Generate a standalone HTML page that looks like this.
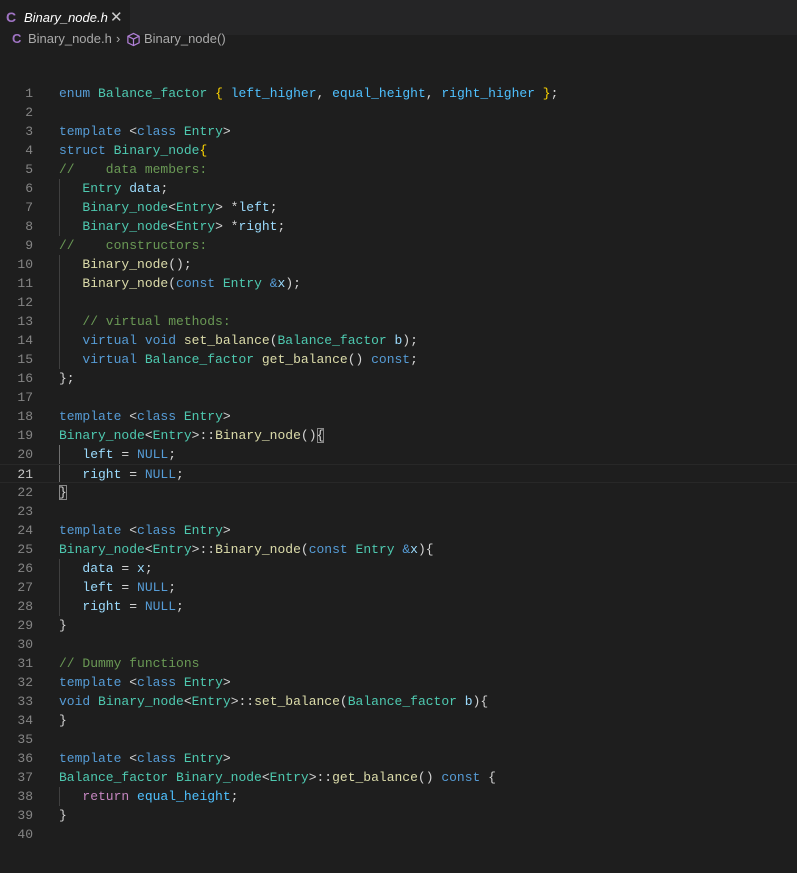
<!DOCTYPE html>
<html><head><meta charset="utf-8"><style>
body{margin:0;width:797px;height:873px;background:#1e1e1e;overflow:hidden;font-family:"Liberation Sans",sans-serif;}
.tabbar{position:absolute;left:0;top:0;width:797px;height:35px;background:#252526;}
.tab{position:absolute;left:0;top:0;width:130px;height:35px;background:#1e1e1e;color:#fff;font-size:13px;}
.tab .c{position:absolute;left:6px;top:9px;color:#a074c4;font-weight:bold;font-size:14px}
.tab .n{position:absolute;left:24px;top:10px;font-style:italic}
.tab .x{position:absolute;left:110px;top:8px;font-size:15px;color:#ccc}
.bc{position:absolute;left:0;top:31px;height:20px;color:#a9a9a9;font-size:13px;}
.bc span{position:absolute;top:0;white-space:nowrap}
.code{position:absolute;left:0;top:84px;font-family:"Liberation Mono",monospace;font-size:13px;}
.l{position:relative;height:19px;line-height:19px;white-space:pre;}
.ln{position:absolute;left:0;width:33px;text-align:right;color:#858585}
.t{position:absolute;left:59px;color:#d4d4d4}
.cur{border-top:1px solid #282828;border-bottom:1px solid #282828;box-sizing:border-box;width:797px}
.cur .ln{color:#c6c6c6}
.k{color:#569cd6}.ty{color:#4ec9b0}.f{color:#dcdcaa}.v{color:#9cdcfe}.cm{color:#6a9955}.e{color:#4fc1ff}.g{color:#ffd700}.r{color:#c586c0}
.guide{position:absolute;width:1px;background:#404040}
</style></head><body>
<div class="tabbar"><div class="tab"><span class="c">C</span><span class="n">Binary_node.h</span><span class="x">✕</span></div></div>
<div class="bc">
<span style="left:12px;color:#a074c4;font-weight:bold">C</span>
<span style="left:28px">Binary_node.h</span>
<span style="left:116px">›</span>
<span style="left:126px;top:1px"><svg width="15" height="15" viewBox="0 0 16 16"><path d="M8 1.5 14 4.5v7L8 14.5 2 11.5v-7z M2 4.5 8 7.5 14 4.5 M8 7.5v7" fill="none" stroke="#b180d7" stroke-width="1.3"/></svg></span>
<span style="left:144px">Binary_node()</span>
</div>
<div class="guide" style="left:59px;top:179px;height:57px"></div>
<div class="guide" style="left:59px;top:255px;height:114px"></div>
<div class="guide" style="left:59px;top:445px;height:38px;background:#707070"></div>
<div class="guide" style="left:59px;top:559px;height:57px"></div>
<div class="guide" style="left:59px;top:787px;height:19px"></div>
<div class="code">
<div class="l"><span class="ln">1</span><span class="t"><span class="k">enum</span> <span class="ty">Balance_factor</span> <span class="g">{</span> <span class="e">left_higher</span>, <span class="e">equal_height</span>, <span class="e">right_higher</span> <span class="g">}</span>;</span></div>
<div class="l"><span class="ln">2</span></div>
<div class="l"><span class="ln">3</span><span class="t"><span class="k">template</span> &lt;<span class="k">class</span> <span class="ty">Entry</span>&gt;</span></div>
<div class="l"><span class="ln">4</span><span class="t"><span class="k">struct</span> <span class="ty">Binary_node</span><span class="g">{</span></span></div>
<div class="l"><span class="ln">5</span><span class="t"><span class="cm">//    data members:</span></span></div>
<div class="l"><span class="ln">6</span><span class="t">   <span class="ty">Entry</span> <span class="v">data</span>;</span></div>
<div class="l"><span class="ln">7</span><span class="t">   <span class="ty">Binary_node</span>&lt;<span class="ty">Entry</span>&gt; *<span class="v">left</span>;</span></div>
<div class="l"><span class="ln">8</span><span class="t">   <span class="ty">Binary_node</span>&lt;<span class="ty">Entry</span>&gt; *<span class="v">right</span>;</span></div>
<div class="l"><span class="ln">9</span><span class="t"><span class="cm">//    constructors:</span></span></div>
<div class="l"><span class="ln">10</span><span class="t">   <span class="f">Binary_node</span>();</span></div>
<div class="l"><span class="ln">11</span><span class="t">   <span class="f">Binary_node</span>(<span class="k">const</span> <span class="ty">Entry</span> <span class="k">&amp;</span><span class="v">x</span>);</span></div>
<div class="l"><span class="ln">12</span></div>
<div class="l"><span class="ln">13</span><span class="t">   <span class="cm">// virtual methods:</span></span></div>
<div class="l"><span class="ln">14</span><span class="t">   <span class="k">virtual</span> <span class="k">void</span> <span class="f">set_balance</span>(<span class="ty">Balance_factor</span> <span class="v">b</span>);</span></div>
<div class="l"><span class="ln">15</span><span class="t">   <span class="k">virtual</span> <span class="ty">Balance_factor</span> <span class="f">get_balance</span>() <span class="k">const</span>;</span></div>
<div class="l"><span class="ln">16</span><span class="t">};</span></div>
<div class="l"><span class="ln">17</span></div>
<div class="l"><span class="ln">18</span><span class="t"><span class="k">template</span> &lt;<span class="k">class</span> <span class="ty">Entry</span>&gt;</span></div>
<div class="l"><span class="ln">19</span><span class="t"><span class="ty">Binary_node</span>&lt;<span class="ty">Entry</span>&gt;::<span class="f">Binary_node</span>()<span style="outline:1px solid #888;outline-offset:-1px">{</span></span></div>
<div class="l"><span class="ln">20</span><span class="t">   <span class="v">left</span> = <span class="k">NULL</span>;</span></div>
<div class="l cur"><span class="ln">21</span><span class="t">   <span class="v">right</span> = <span class="k">NULL</span>;</span></div>
<div class="l"><span class="ln">22</span><span class="t"><span style="outline:1px solid #888;outline-offset:-1px">}</span></span></div>
<div class="l"><span class="ln">23</span></div>
<div class="l"><span class="ln">24</span><span class="t"><span class="k">template</span> &lt;<span class="k">class</span> <span class="ty">Entry</span>&gt;</span></div>
<div class="l"><span class="ln">25</span><span class="t"><span class="ty">Binary_node</span>&lt;<span class="ty">Entry</span>&gt;::<span class="f">Binary_node</span>(<span class="k">const</span> <span class="ty">Entry</span> <span class="k">&amp;</span><span class="v">x</span>){</span></div>
<div class="l"><span class="ln">26</span><span class="t">   <span class="v">data</span> = <span class="v">x</span>;</span></div>
<div class="l"><span class="ln">27</span><span class="t">   <span class="v">left</span> = <span class="k">NULL</span>;</span></div>
<div class="l"><span class="ln">28</span><span class="t">   <span class="v">right</span> = <span class="k">NULL</span>;</span></div>
<div class="l"><span class="ln">29</span><span class="t">}</span></div>
<div class="l"><span class="ln">30</span></div>
<div class="l"><span class="ln">31</span><span class="t"><span class="cm">// Dummy functions</span></span></div>
<div class="l"><span class="ln">32</span><span class="t"><span class="k">template</span> &lt;<span class="k">class</span> <span class="ty">Entry</span>&gt;</span></div>
<div class="l"><span class="ln">33</span><span class="t"><span class="k">void</span> <span class="ty">Binary_node</span>&lt;<span class="ty">Entry</span>&gt;::<span class="f">set_balance</span>(<span class="ty">Balance_factor</span> <span class="v">b</span>){</span></div>
<div class="l"><span class="ln">34</span><span class="t">}</span></div>
<div class="l"><span class="ln">35</span></div>
<div class="l"><span class="ln">36</span><span class="t"><span class="k">template</span> &lt;<span class="k">class</span> <span class="ty">Entry</span>&gt;</span></div>
<div class="l"><span class="ln">37</span><span class="t"><span class="ty">Balance_factor</span> <span class="ty">Binary_node</span>&lt;<span class="ty">Entry</span>&gt;::<span class="f">get_balance</span>() <span class="k">const</span> {</span></div>
<div class="l"><span class="ln">38</span><span class="t">   <span class="r">return</span> <span class="e">equal_height</span>;</span></div>
<div class="l"><span class="ln">39</span><span class="t">}</span></div>
<div class="l"><span class="ln">40</span></div>
</div>
</body></html>
